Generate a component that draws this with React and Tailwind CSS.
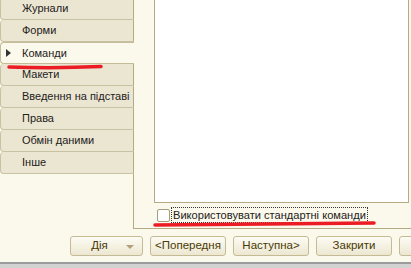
const tabs = [
  "Журнали",
  "Форми",
  "Команди",
  "Макети",
  "Введення на підставі",
  "Права",
  "Обмін даними",
  "Інше",
];

const font = { fontFamily: '"Liberation Sans", Arial, sans-serif' };

function Tab({ label, active }) {
  if (active) {
    return (
      <div className="relative flex h-[22px] items-center whitespace-nowrap rounded-l-[4px] border-y border-l border-[#c4bc98] bg-[#fbf9eb] pl-[21px] text-[11px] text-[#23211a]">
        <span className="absolute left-[5px] top-[6px] h-0 w-0 border-y-[4px] border-l-[5px] border-y-transparent border-l-[#333]" />
        {label}
      </div>
    );
  }
  return (
    <div className="flex h-[22px] items-center whitespace-nowrap rounded-l-[4px] border-b border-l border-r border-[#c9c2a2] border-r-[#b4ab86] bg-[#ebe6d2] pl-[21px] text-[11px] text-[#23211a]">
      {label}
    </div>
  );
}

function Button({ label, width, arrow }) {
  return (
    <div
      className="relative flex h-[20px] shrink-0 items-center justify-center whitespace-nowrap rounded-[3px] border border-[#c4bb94] bg-gradient-to-b from-[#fdfcf4] to-[#ece7d1] text-[11.5px] text-[#4a3a05]"
      style={{ width }}
    >
      <span className={arrow ? "pr-[14px]" : ""}>{label}</span>
      {arrow && (
        <span className="absolute right-[8px] top-[8px] h-0 w-0 border-x-[4px] border-t-[4px] border-x-transparent border-t-[#b39f78]" />
      )}
    </div>
  );
}

export default function App() {
  return (
    <div className="relative h-[268px] w-[411px] overflow-hidden bg-[#fbf9eb]" style={font}>
      <div className="flex h-[229px]">
        <div className="flex w-[134px] flex-col">
          <div className="mt-[-2px] flex flex-col">
            {tabs.map((t) => (
              <Tab key={t} label={t} active={t === "Команди"} />
            ))}
          </div>
          <div className="flex-1 border-r border-[#b4ab86]" />
        </div>
        <div className="flex flex-1 flex-col border-b border-[#b4ab86] pl-[20px] pr-[2px]">
          <div className="mt-[-1px] h-[204px] border border-[#b4ab86] bg-white" />
          <div className="mt-[4px] flex items-center">
            <span className="ml-[3px] h-[13px] w-[13px] rounded-[2px] border border-[#a39c80] bg-white" />
            <span className="ml-[1px] whitespace-nowrap border border-dotted border-[#333] px-[1px] text-[11.1px] leading-[14px] text-[#23211a]">
              Використовувати стандартні команди
            </span>
          </div>
        </div>
      </div>
      <div className="flex h-[33px] items-center gap-[7px] pl-[70px] pt-[1px]">
        <Button label="Дія" width={73} arrow />
        <Button label="<Попередня" width={76} />
        <Button label="Наступна>" width={76} />
        <Button label="Закрити" width={76} />
        <Button label="" width={76} />
      </div>
      <div className="h-[6px] border-t-2 border-[#9c9c9c] bg-[#d2d2d2]" />
      <svg className="absolute left-0 top-0" width="411" height="268" viewBox="0 0 411 268">
        <path d="M9 67 Q55 68.5 101 66.5" stroke="#ec1c24" strokeWidth="3.5" strokeLinecap="round" fill="none" />
        <path d="M155 225 Q260 224 374 223" stroke="#ec1c24" strokeWidth="3.5" strokeLinecap="round" fill="none" />
      </svg>
    </div>
  );
}
